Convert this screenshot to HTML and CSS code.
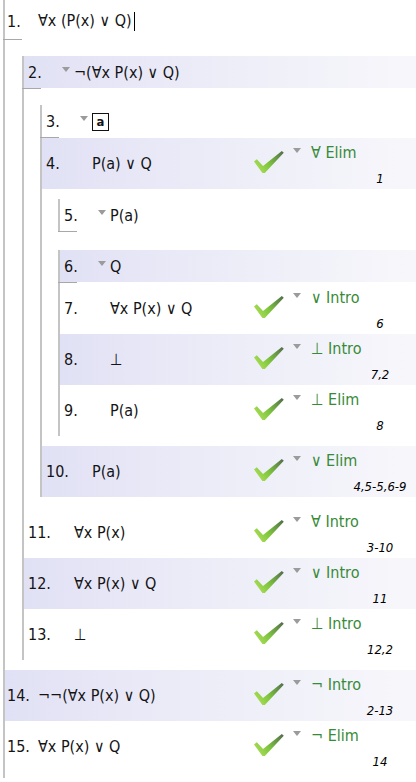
FILE: index.html
```html
<!DOCTYPE html>
<html>
<head>
<meta charset="utf-8">
<title>Proof</title>
<link rel="stylesheet" href="styles.css">
</head>
<body>
<svg class="defs" width="0" height="0">
  <defs>
    <linearGradient id="chk" gradientUnits="userSpaceOnUse" x1="0" y1="22" x2="30" y2="0">
      <stop offset="0" stop-color="#b8e65e"/>
      <stop offset="0.45" stop-color="#7fc63e"/>
      <stop offset="1" stop-color="#4f6a4c"/>
    </linearGradient>
  </defs>
</svg>
<div class="proof">
  <div class="row asm top first"><span class="num">1.</span><span class="f">∀x (P(x) ∨ Q)<span class="caret"></span></span></div>
  <div class="bar"></div>
  <div class="sub">
    <div class="row asm hl"><span class="num">2.</span><span class="tog"><i class="tri"></i></span><span class="f">¬(∀x P(x) ∨ Q)</span></div>
    <div class="bar"></div>
    <div class="sub">
      <div class="row asm"><span class="num">3.</span><span class="tog"><i class="tri"></i></span><span class="f"><span class="boxvar">a</span></span></div>
      <div class="bar"></div>
      <div class="row hl"><span class="num">4.</span><span class="tog"></span><span class="f">P(a) ∨ Q</span>
        <div class="just"><svg class="check" viewBox="0 0 30 23" width="30" height="23"><polygon points="0,10.5 2.8,8.2 9,15 27.8,0 29.8,1.8 10.8,22 8.4,22" fill="url(#chk)"/></svg><div class="rb"><div class="rule"><i class="tri"></i>∀ Elim</div><div class="ref">1</div></div></div>
      </div>
      <div class="sub">
        <div class="row asm"><span class="num">5.</span><span class="tog"><i class="tri"></i></span><span class="f">P(a)</span></div>
        <div class="bar"></div>
      </div>
      <div class="sub">
        <div class="row asm hl"><span class="num">6.</span><span class="tog"><i class="tri"></i></span><span class="f">Q</span></div>
        <div class="bar"></div>
        <div class="row"><span class="num">7.</span><span class="tog"></span><span class="f">∀x P(x) ∨ Q</span>
          <div class="just"><svg class="check" viewBox="0 0 30 23" width="30" height="23"><polygon points="0,10.5 2.8,8.2 9,15 27.8,0 29.8,1.8 10.8,22 8.4,22" fill="url(#chk)"/></svg><div class="rb"><div class="rule"><i class="tri"></i>∨ Intro</div><div class="ref">6</div></div></div>
        </div>
        <div class="row hl"><span class="num">8.</span><span class="tog"></span><span class="f">⊥</span>
          <div class="just"><svg class="check" viewBox="0 0 30 23" width="30" height="23"><polygon points="0,10.5 2.8,8.2 9,15 27.8,0 29.8,1.8 10.8,22 8.4,22" fill="url(#chk)"/></svg><div class="rb"><div class="rule"><i class="tri"></i>⊥ Intro</div><div class="ref">7,2</div></div></div>
        </div>
        <div class="row"><span class="num">9.</span><span class="tog"></span><span class="f">P(a)</span>
          <div class="just"><svg class="check" viewBox="0 0 30 23" width="30" height="23"><polygon points="0,10.5 2.8,8.2 9,15 27.8,0 29.8,1.8 10.8,22 8.4,22" fill="url(#chk)"/></svg><div class="rb"><div class="rule"><i class="tri"></i>⊥ Elim</div><div class="ref">8</div></div></div>
        </div>
      </div>
      <div class="row hl"><span class="num">10.</span><span class="tog"></span><span class="f">P(a)</span>
        <div class="just"><svg class="check" viewBox="0 0 30 23" width="30" height="23"><polygon points="0,10.5 2.8,8.2 9,15 27.8,0 29.8,1.8 10.8,22 8.4,22" fill="url(#chk)"/></svg><div class="rb"><div class="rule"><i class="tri"></i>∨ Elim</div><div class="ref">4,5-5,6-9</div></div></div>
      </div>
    </div>
    <div class="row"><span class="num">11.</span><span class="tog"></span><span class="f">∀x P(x)</span>
      <div class="just"><svg class="check" viewBox="0 0 30 23" width="30" height="23"><polygon points="0,10.5 2.8,8.2 9,15 27.8,0 29.8,1.8 10.8,22 8.4,22" fill="url(#chk)"/></svg><div class="rb"><div class="rule"><i class="tri"></i>∀ Intro</div><div class="ref">3-10</div></div></div>
    </div>
    <div class="row hl"><span class="num">12.</span><span class="tog"></span><span class="f">∀x P(x) ∨ Q</span>
      <div class="just"><svg class="check" viewBox="0 0 30 23" width="30" height="23"><polygon points="0,10.5 2.8,8.2 9,15 27.8,0 29.8,1.8 10.8,22 8.4,22" fill="url(#chk)"/></svg><div class="rb"><div class="rule"><i class="tri"></i>∨ Intro</div><div class="ref">11</div></div></div>
    </div>
    <div class="row"><span class="num">13.</span><span class="tog"></span><span class="f">⊥</span>
      <div class="just"><svg class="check" viewBox="0 0 30 23" width="30" height="23"><polygon points="0,10.5 2.8,8.2 9,15 27.8,0 29.8,1.8 10.8,22 8.4,22" fill="url(#chk)"/></svg><div class="rb"><div class="rule"><i class="tri"></i>⊥ Intro</div><div class="ref">12,2</div></div></div>
    </div>
  </div>
  <div class="row top hl"><span class="num">14.</span><span class="f">¬¬(∀x P(x) ∨ Q)</span>
    <div class="just"><svg class="check" viewBox="0 0 30 23" width="30" height="23"><polygon points="0,10.5 2.8,8.2 9,15 27.8,0 29.8,1.8 10.8,22 8.4,22" fill="url(#chk)"/></svg><div class="rb"><div class="rule"><i class="tri"></i>¬ Intro</div><div class="ref">2-13</div></div></div>
  </div>
  <div class="row top"><span class="num">15.</span><span class="f">∀x P(x) ∨ Q</span>
    <div class="just"><svg class="check" viewBox="0 0 30 23" width="30" height="23"><polygon points="0,10.5 2.8,8.2 9,15 27.8,0 29.8,1.8 10.8,22 8.4,22" fill="url(#chk)"/></svg><div class="rb"><div class="rule"><i class="tri"></i>¬ Elim</div><div class="ref">14</div></div></div>
  </div>
</div>
</body>
</html>
```

FILE: styles.css
```css
* { box-sizing: border-box; }
html, body { margin: 0; padding: 0; background: #ffffff; }
body {
  width: 416px;
  overflow: hidden;
  font-family: "DejaVu Sans Condensed", "DejaVu Sans", sans-serif;
  font-stretch: condensed;
  font-size: 16px;
  color: #141414;
}
.defs { position: absolute; width: 0; height: 0; }

.proof {
  display: flex;
  flex-direction: column;
  margin-left: 3px;
  border-left: 2px solid #c4c4c4;
  padding-top: 3px;
  padding-bottom: 6px;
}
.sub {
  display: flex;
  flex-direction: column;
  border-left: 2px solid #c4c4c4;
  margin-left: 16px;
  margin-top: 10px;
}
.proof > .sub { margin-left: 17px; }
.bar + .sub { margin-top: 16px; }
.sub + .sub { margin-top: 18px; }
.sub + .row { margin-top: 10px; }

.row {
  display: flex;
  align-items: center;
  height: 51px;
  padding-left: 4px;
}
.row.asm { height: 32px; }
.row.top { padding-left: 2px; }
.row.first { height: 36px; }
.hl { background: linear-gradient(90deg, #e1e1f5 0%, #ececf8 45%, #f7f7fb 100%); }

.num { width: 34px; flex-shrink: 0; }
.top .num { width: 31px; }
.tog {
  width: 12px;
  flex-shrink: 0;
  display: flex;
  align-self: center;
  margin-top: -6px;
}
.f { flex: 1; white-space: nowrap; }

.tri {
  display: inline-block;
  width: 0;
  height: 0;
  border-left: 4px solid transparent;
  border-right: 4px solid transparent;
  border-top: 5px solid #9b9b9b;
}

.bar {
  width: 19px;
  height: 1px;
  background: #a8a8a8;
  margin-left: -2px;
}

.caret {
  display: inline-block;
  width: 1px;
  height: 19px;
  background: #000;
  vertical-align: middle;
  margin-left: 2px;
}

.boxvar {
  display: inline-block;
  width: 17px;
  height: 18px;
  border: 1.5px solid #111;
  font-size: 13px;
  font-weight: bold;
  line-height: 15px;
  text-align: center;
  vertical-align: middle;
}

.just {
  width: 162px;
  flex-shrink: 0;
  align-self: stretch;
  display: flex;
}
.check { flex-shrink: 0; margin-top: 13px; }
.rb { margin-left: 9px; display: flex; flex-direction: column; }
.rule {
  display: flex;
  align-items: flex-start;
  padding-top: 6px;
  line-height: 18px;
  color: #378a37;
  white-space: nowrap;
}
.rule .tri { margin-top: 4px; margin-right: 10px; }
.ref {
  margin-top: 9px;
  margin-left: 57px;
  width: 60px;
  text-align: center;
  line-height: 16px;
  font-size: 13px;
  font-style: italic;
  color: #000;
  white-space: nowrap;
}
```
